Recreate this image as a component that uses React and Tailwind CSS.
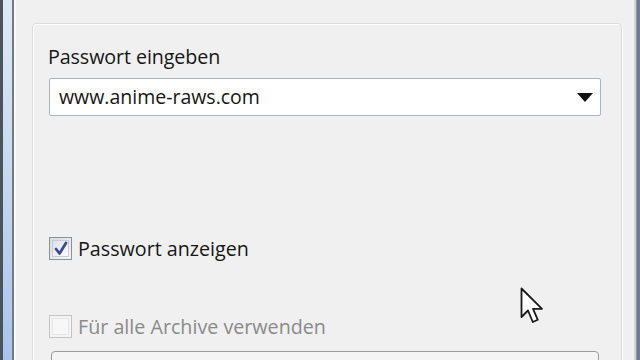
export default function App() {
  return (
    <div
      className="w-[640px] h-[360px] overflow-hidden flex bg-[#f0f0f0] relative"
      style={{ fontFamily: '"Open Sans", "Noto Sans", sans-serif' }}
    >
      {/* left window edge */}
      <div className="flex h-full shrink-0">
        <div className="w-[3px] h-full bg-[#4b535c]" />
        <div className="w-[9px] h-full bg-gradient-to-b from-[#dfe9f5] via-[#c6d8f0] to-[#a9c4ec]" />
        <div className="w-[2px] h-full bg-[#737a82]" />
        <div className="w-[2px] h-full bg-[#fafafa]" />
      </div>

      {/* main area */}
      <div className="flex-1 pt-[23px] pl-[16px] pr-[12px]">
        <div className="h-[400px] rounded-[4px] border border-[#d9dde0] shadow-[inset_1px_1px_0_#ffffff,1px_1px_0_#ffffff] pt-[23px] pl-[15px] pr-[20px]">
          <div className="h-[20px] flex items-center text-[19.7px] leading-none text-[#161616] tracking-[-0.1px]">
            Passwort eingeben
          </div>
          <div className="mt-[11px] ml-[1px] h-[38px] rounded-[2px] border border-[#aab4c2] bg-white flex items-center pl-[9px] pr-[7px]">
            <span className="flex-1 text-[19.5px] leading-none text-[#161616]">www.anime-raws.com</span>
            <svg width="16" height="9" viewBox="0 0 16 9">
              <polygon points="0,0 16,0 8,9" fill="#111" />
            </svg>
          </div>

          <div className="mt-[121px] ml-[1px] flex items-center h-[23px]">
            <div className="w-[23px] h-[23px] border border-[#8e8f8f] bg-gradient-to-br from-[#d8dbe2] to-[#f6f6f8] p-[2px] shrink-0">
              <div className="w-full h-full border border-[#c9ccd4] bg-gradient-to-br from-[#dfe2ea] to-[#fbfbfc] flex items-center justify-center">
                <svg width="14" height="15" viewBox="0 0 14 15">
                  <path d="M2 8 L5.5 12.5 L12 2" fill="none" stroke="#3c4a94" strokeWidth="2.8" strokeLinecap="round" strokeLinejoin="round" />
                </svg>
              </div>
            </div>
            <span className="ml-[6px] text-[19.7px] leading-none text-[#161616]">Passwort anzeigen</span>
          </div>

          <div className="mt-[55px] ml-[1px] flex items-center h-[23px]">
            <div className="w-[23px] h-[23px] border border-[#c4c4c4] bg-[#f4f4f4] p-[2px] shrink-0">
              <div className="w-full h-full border border-[#e6e6e6] bg-[#f7f7f7]" />
            </div>
            <span className="ml-[6px] text-[19.7px] leading-none text-[#8a8a8a]">Für alle Archive verwenden</span>
          </div>

          <div className="mt-[13px] ml-[3px] mr-[2px] h-[40px] rounded-t-[4px] border border-[#9a9a9a] bg-[#f4f4f4]" />
        </div>
      </div>

      {/* right window edge */}
      <div className="flex h-full shrink-0">
        <div className="w-[2px] h-full bg-[#d3d6d9]" />
        <div className="w-[1px] h-full bg-[#8c97a5]" />
        <div className="w-[3px] h-full bg-[#6d7c8f]" />
      </div>

      {/* mouse cursor */}
      <svg className="absolute left-[520px] top-[287px]" width="28" height="40" viewBox="0 0 28 40">
        <path
          d="M1.5 1.5 L1.5 30 L8 23.5 L12.8 35 L17.8 32.8 L13 21.8 L22 21.8 Z"
          fill="#ffffff"
          stroke="#1a1a1a"
          strokeWidth="1.8"
          strokeLinejoin="round"
        />
      </svg>
    </div>
  );
}
